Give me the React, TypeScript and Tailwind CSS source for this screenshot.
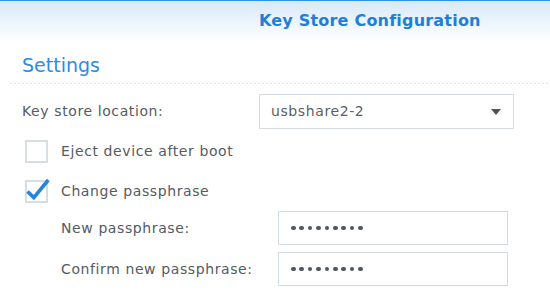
import React from "react";

function Dots() {
  return (
    <div className="flex items-center gap-[3.8px]">
      {Array.from({ length: 9 }).map((_, i) => (
        <span key={i} className="block w-[4.6px] h-[4.6px] rounded-full bg-[#4b5866]" />
      ))}
    </div>
  );
}

function Box({ checked }: { checked?: boolean }) {
  return (
    <div className="relative w-[23px] h-[23px] border-2 border-[#d6dde4] bg-white shrink-0">
      {checked && (
        <svg className="absolute left-[-2px] top-[-3px] overflow-visible" width="26" height="26" viewBox="0 0 26 26">
          <path d="M2.5 12.5 L8.8 18.6 L23.3 1" fill="none" stroke="#2585dc" strokeWidth="3.6" strokeLinecap="butt" strokeLinejoin="miter" />
        </svg>
      )}
    </div>
  );
}

export default function App() {
  return (
    <div
      className="w-[550px] h-[303px] overflow-hidden bg-white text-[#555b61]"
      style={{ fontFamily: '"DejaVu Sans", Verdana, sans-serif' }}
    >
      <div className="h-[41px] border-t border-[#3192e6] bg-gradient-to-b from-[#d7e9f8] to-white flex items-center pl-[259px]">
        <span className="text-[16px] font-bold text-[#1f7fd6] tracking-[0.2px]">Key Store Configuration</span>
      </div>
      <div className="mt-[13px] h-[22px] leading-[22px] pl-[22px] text-[19px] text-[#2f8be0]">Settings</div>
      <div className="mt-[7px] ml-[10px] h-px bg-[repeating-linear-gradient(to_right,#dde2e7_0_2px,transparent_2px_4px)]" />
      <div className="mt-[10px] text-[14px] tracking-[0.6px]">
        <div className="flex items-center h-[35px]">
          <div className="pl-[22px] w-[259px]">Key store location:</div>
          <div className="w-[255px] h-[35px] border border-[#d5dbe1] flex items-center justify-between pl-[11px] pr-[12px] text-[#5a5f64]">
            <span>usbshare2-2</span>
            <span className="block w-0 h-0 border-l-[5.5px] border-r-[5.5px] border-t-[6px] border-l-transparent border-r-transparent border-t-[#4e5257]" />
          </div>
        </div>
        <div className="flex items-center h-[40px] mt-[2px] pl-[25px] gap-[13px]">
          <Box />
          <span>Eject device after boot</span>
        </div>
        <div className="flex items-center h-[40px] pl-[25px] gap-[13px]">
          <Box checked />
          <span>Change passphrase</span>
        </div>
        <div className="flex flex-col gap-[7px]">
          <div className="flex items-center h-[34px]">
            <div className="pl-[61px] w-[278px]">New passphrase:</div>
            <div className="w-[230px] h-[34px] border border-[#d3dbe3] flex items-center pl-[12px]">
              <Dots />
            </div>
          </div>
          <div className="flex items-center h-[34px]">
            <div className="pl-[61px] w-[278px]">Confirm new passphrase:</div>
            <div className="w-[230px] h-[34px] border border-[#d3dbe3] flex items-center pl-[12px]">
              <Dots />
            </div>
          </div>
        </div>
      </div>
    </div>
  );
}
